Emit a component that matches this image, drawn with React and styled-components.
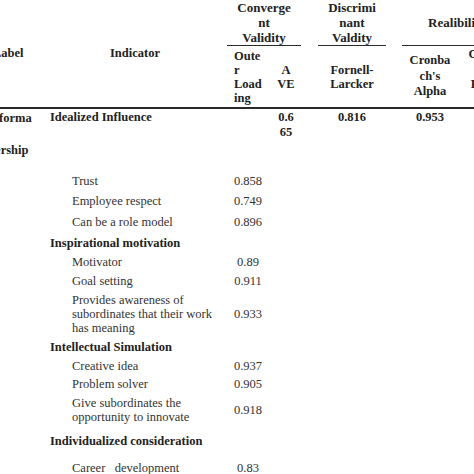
import React from 'react'
import styled, { createGlobalStyle } from 'styled-components';

const GlobalStyle = createGlobalStyle`
  html, body {
    margin: 0;
    padding: 0;
    background: #ffffff;
    overflow: hidden;
  }
  body {
    width: 474px;
    height: 474px;
    font-family: "Liberation Serif", "Times New Roman", serif;
  }
`

const groups = [
  {
    name: 'Idealized Influence',
    items: [
      { text: ['Trust'], value: '0.858', h: 20 },
      { text: ['Employee respect'], value: '0.749', h: 20 },
      { text: ['Can be a role model'], value: '0.896', h: 22 },
    ],
  },
  {
    name: 'Inspirational motivation',
    h: 20,
    items: [
      { text: ['Motivator'], value: '0.89', h: 18 },
      { text: ['Goal setting'], value: '0.911', h: 20 },
      { text: ['Provides awareness of', 'subordinates that their work', 'has meaning'], value: '0.933', h: 46 },
    ],
  },
  {
    name: 'Intellectual Simulation',
    h: 20,
    items: [
      { text: ['Creative idea'], value: '0.937', h: 18 },
      { text: ['Problem solver'], value: '0.905', h: 18 },
      { text: ['Give subordinates the', 'opportunity to innovate'], value: '0.918', h: 34 },
    ],
  },
  {
    name: 'Individualized consideration',
    h: 28,
    items: [
      { text: ['Career\u00a0\u00a0\u00a0development'], value: '0.83', h: 26 },
    ],
  },
]

const lines = (arr) => arr.map((t, i) => (
  <React.Fragment key={i}>{i > 0 && <br />}{t}</React.Fragment>
))

const App = () => {
  const bodyRows = groups.reduce((n, g) => n + 1 + g.items.length, 0);

  return (
    <>
      <GlobalStyle />
      <Table>
        <colgroup>
          <col style={{ width: 80 }} />
          <col style={{ width: 178 }} />
          <col style={{ width: 48 }} />
          <col style={{ width: 28 }} />
          <col style={{ width: 104 }} />
          <col style={{ width: 52 }} />
          <col style={{ width: 64 }} />
        </colgroup>
        <thead>
          <tr>
            <HeadCell rowSpan={2} $pad="0 0 0 27px">Label</HeadCell>
            <HeadCell rowSpan={2}>Indicator</HeadCell>
            <GroupCell colSpan={2}>
              <GroupTitle $left={3} $right={-1}>{lines(['Converge', 'nt', 'Validity'])}</GroupTitle>
            </GroupCell>
            <GroupCell>
              <GroupTitle $left={18} $right={18}>{lines(['Discrimi', 'nant', 'Valdity'])}</GroupTitle>
            </GroupCell>
            <GroupCell colSpan={2}>
              <GroupTitle $left={-2} $right={8}>Realibility</GroupTitle>
            </GroupCell>
          </tr>
          <SubHeadRow>
            <SubHead $align="left" $pad="0 0 0 10px">{lines(['Oute', 'r', 'Load', 'ing'])}</SubHead>
            <SubHead>{lines(['A', 'VE'])}</SubHead>
            <SubHead>{lines(['Fornell-', 'Larcker'])}</SubHead>
            <SubHead $lh={15.5}>{lines(['Cronba', "ch's", 'Alpha'])}</SubHead>
            <SubHead $lh={15}>{lines(['Compo', 'site', 'Reliab', 'ility'])}</SubHead>
          </SubHeadRow>
        </thead>
        <tbody>
          <tr>
            <LabelCell rowSpan={bodyRows}>{lines(['Transforma', 'tional', 'Leadership'])}</LabelCell>
            <GroupName $top>Idealized Influence</GroupName>
            <ValueCell $top />
            <ValueCell $top $bold $lh={15}>{lines(['0.6', '65'])}</ValueCell>
            <ValueCell $top $bold>0.816</ValueCell>
            <ValueCell $top $bold>0.953</ValueCell>
            <ValueCell $top $bold>0.960</ValueCell>
          </tr>
          {groups.map((g, gi) => (
            <React.Fragment key={g.name}>
              {gi > 0 && (
                <BodyRow $h={g.h}>
                  <GroupName>{g.name}</GroupName>
                  <ValueCell />
                  <ValueCell />
                  <ValueCell />
                  <ValueCell />
                  <ValueCell />
                </BodyRow>
              )}
              {g.items.map((it) => (
                <BodyRow key={it.value + it.text[0]} $h={it.h}>
                  <ItemName>{lines(it.text)}</ItemName>
                  <ValueCell>{it.value}</ValueCell>
                  <ValueCell />
                  <ValueCell />
                  <ValueCell />
                  <ValueCell />
                </BodyRow>
              ))}
            </React.Fragment>
          ))}
        </tbody>
      </Table>
    </>
  )
}

export default App;

const Table = styled.table`
  table-layout: fixed;
  width: 554px;
  margin-left: -34px;
  border-collapse: collapse;
  border-spacing: 0;
  font-size: 12.5px;
  color: #333333;
`

const HeadCell = styled.th`
  height: 107px;
  padding: ${(p) => p.$pad || '0'};
  text-align: ${(p) => (p.$pad ? 'left' : 'center')};
  vertical-align: middle;
  font-weight: bold;
  color: #222222;
  border-bottom: 2px solid #2a2a2a;
`

const GroupCell = styled.th`
  height: 46px;
  padding: 0;
  vertical-align: top;
  font-weight: bold;
  color: #222222;
`

const GroupTitle = styled.div`
  height: 45px;
  margin: 0 ${(p) => p.$right}px 0 ${(p) => p.$left}px;
  display: flex;
  align-items: center;
  justify-content: center;
  text-align: center;
  line-height: 15px;
  font-size: 13px;
  border-bottom: 1.5px solid #2a2a2a;
`

const SubHeadRow = styled.tr`
  height: 61px;
`

const SubHead = styled.th`
  padding: ${(p) => p.$pad || '0'};
  text-align: ${(p) => p.$align || 'center'};
  vertical-align: middle;
  line-height: ${(p) => p.$lh || 14}px;
  font-weight: bold;
  color: #222222;
  border-bottom: 2px solid #2a2a2a;
`

const LabelCell = styled.td`
  padding: 1px 0 0 2px;
  vertical-align: top;
  line-height: 16px;
  font-weight: bold;
  color: #222222;
`

const BodyRow = styled.tr`
  height: ${(p) => p.$h}px;
`

const GroupName = styled.td`
  height: ${(p) => (p.$top ? '61px' : 'auto')};
  padding: ${(p) => (p.$top ? '1px' : '0')} 0 0 4px;
  vertical-align: ${(p) => (p.$top ? 'top' : 'middle')};
  line-height: 14px;
  font-weight: bold;
  color: #222222;
  white-space: nowrap;
`

const ItemName = styled.td`
  padding: 0 0 0 26px;
  vertical-align: middle;
  line-height: 14px;
  white-space: nowrap;
`

const ValueCell = styled.td`
  padding: ${(p) => (p.$top ? '1px' : '0')} 0 0 0;
  text-align: center;
  vertical-align: ${(p) => (p.$top ? 'top' : 'middle')};
  line-height: ${(p) => p.$lh || 14}px;
  font-weight: ${(p) => (p.$bold ? 'bold' : 'normal')};
  color: ${(p) => (p.$bold ? '#222222' : '#333333')};
`
